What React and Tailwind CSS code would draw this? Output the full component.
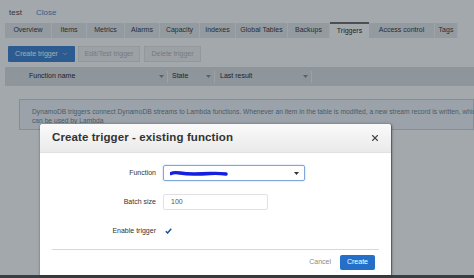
import { ChevronDown, X } from 'lucide-react'

const TABS = [
  { label: 'Overview', w: 47 },
  { label: 'Items', w: 35 },
  { label: 'Metrics', w: 38 },
  { label: 'Alarms', w: 35 },
  { label: 'Capacity', w: 40 },
  { label: 'Indexes', w: 36 },
  { label: 'Global Tables', w: 52 },
  { label: 'Backups', w: 42 },
  { label: 'Triggers', w: 39, active: true },
  { label: 'Access control', w: 66 },
  { label: 'Tags', w: 23 },
]

const Caret = () => (
  <svg width="5" height="3" viewBox="0 0 5 3" className="fill-current">
    <path d="M0 0h5L2.5 3z" />
  </svg>
)

export default function App() {
  return (
    <div className="relative w-[474px] h-[278px] overflow-hidden bg-white flex flex-col font-['Liberation_Sans',Arial,sans-serif]">
      {/* page under the dialog */}
      <div className="flex-1 flex flex-col">
        <div className="h-[23px] flex items-center gap-[14px] pl-[9px] pt-[2px] text-[8px]">
          <span className="text-[#444]">test</span>
          <span className="text-[#4a86c0]">Close</span>
        </div>

        <div className="ml-[5px] flex h-[15px] bg-[#e6e9ea] w-[453px]">
          {TABS.map(t => (
            <div
              key={t.label}
              style={{ width: t.w }}
              className={
                t.active
                  ? 'h-[16px] -mt-[1px] bg-white border-t-2 border-[#6b6b6b] flex items-center justify-center text-[7px] text-[#222]'
                  : 'h-full border-r border-[#f8f8f8] flex items-center justify-center text-[7px] text-[#333]'
              }
            >
              {t.label}
            </div>
          ))}
        </div>

        <div className="flex gap-[3px] ml-[8px] mt-[8px] h-[16px] text-[7px]">
          <div className="w-[67px] bg-[#3a7fd2] text-white flex items-center justify-center gap-[4px] rounded-[1px]">
            Create trigger <ChevronDown size={6} strokeWidth={2} />
          </div>
          <div className="w-[62px] bg-[#f3f3f3] border border-[#e4e4e4] text-[#b5b5b5] flex items-center justify-center">
            Edit/Test trigger
          </div>
          <div className="w-[57px] ml-[1px] bg-[#f3f3f3] border border-[#e4e4e4] text-[#b5b5b5] flex items-center justify-center">
            Delete trigger
          </div>
        </div>

        <div className="ml-[5px] mt-[5px] h-[19px] bg-[#dde0e2] flex items-center text-[7px] text-[#222]">
          <div className="w-[24px]" />
          <div className="w-[138px] flex items-center justify-between pr-[3px]">
            Function name <span className="text-[#888]"><Caret /></span>
          </div>
          <div className="h-[12px] border-l border-[#f4f4f4]" />
          <div className="w-[46px] pl-[4px] flex items-center justify-between pr-[3px]">
            State <span className="text-[#888]"><Caret /></span>
          </div>
          <div className="h-[12px] border-l border-[#f4f4f4]" />
          <div className="w-[96px] pl-[5px] flex items-center justify-between pr-[3px]">
            Last result <span className="text-[#888]"><Caret /></span>
          </div>
          <div className="h-[12px] border-l border-[#f4f4f4]" />
        </div>

        <div className="ml-[19px] mt-[13px] border border-[#c8d4dc] bg-[#f2f6f8] pl-[12px] pt-[7px] pb-[4px] text-[6.7px] leading-[9px] text-[#6d7f8c] whitespace-nowrap">
          <div>
            DynamoDB triggers connect DynamoDB streams to Lambda functions. Whenever an item in the table is modified, a new stream record is written, which
          </div>
          <div>can be used by Lambda</div>
        </div>
      </div>

      <div className="h-[3px] bg-[#3a3d41] shrink-0" />

      {/* backdrop */}
      <div className="absolute inset-0 bottom-[3px] bg-[rgba(25,37,50,0.4)]" />

      {/* dialog */}
      <div className="absolute left-[40px] top-[124px] w-[352px] bottom-[3px] bg-white rounded-t-[3px] shadow-[0_0_3px_rgba(0,0,0,0.35)] border-r border-[#5a5f64] flex flex-col">
        <div className="h-[29px] shrink-0 rounded-t-[3px] bg-gradient-to-b from-[#fafafa] to-[#eaeaea] border-b border-[#e0e0e0] flex items-center justify-between pl-[12px] pr-[11px]">
          <span className="text-[11.5px] font-bold text-[#333] tracking-[0.1px]">Create trigger - existing function</span>
          <X size={10} strokeWidth={2.6} className="text-[#444]" />
        </div>

        <div className="flex flex-col text-[7px] text-[#333]">
          <div className="flex items-center mt-[12px] h-[16px]">
            <div className="w-[123px] text-right pr-[7px]">Function</div>
            <div className="w-[142px] h-[16px] border border-[#7fa8d8] rounded-[2px] shadow-[0_0_2px_rgba(90,150,220,0.5)] flex items-center justify-between pl-[6px] pr-[5px]">
              <svg width="58" height="7" viewBox="0 0 58 7">
                <path d="M1 3.5 Q4 2 10 3 T24 4 T40 3.5 T56 4" stroke="#1420e0" strokeWidth="3.4" fill="none" strokeLinecap="round" />
              </svg>
              <span className="text-[#333]"><Caret /></span>
            </div>
          </div>

          <div className="flex items-center mt-[13px] h-[16px]">
            <div className="w-[123px] text-right pr-[7px]">Batch size</div>
            <div className="w-[105px] h-[16px] border border-[#e2e2e2] rounded-[2px] flex items-center pl-[7px] text-[#555]">100</div>
          </div>

          <div className="flex items-center mt-[13px] h-[16px]">
            <div className="w-[123px] text-right pr-[7px]">Enable trigger</div>
            <svg width="7" height="6" viewBox="0 0 7 6" className="ml-[2px]">
              <path d="M0.8 3.2 L2.6 5 L6.2 0.8" stroke="#1c4f9c" strokeWidth="1.5" fill="none" />
            </svg>
          </div>

          <div className="mx-[12px] mt-[10px] border-t border-[#d8d8d8]" />

          <div className="flex items-center justify-end gap-[9px] mt-[5px] mr-[16px]">
            <span className="text-[#8a8a8a]">Cancel</span>
            <div className="w-[35px] h-[15px] bg-[#2470c8] rounded-[2px] text-white flex items-center justify-center">Create</div>
          </div>
        </div>
      </div>
    </div>
  )
}
